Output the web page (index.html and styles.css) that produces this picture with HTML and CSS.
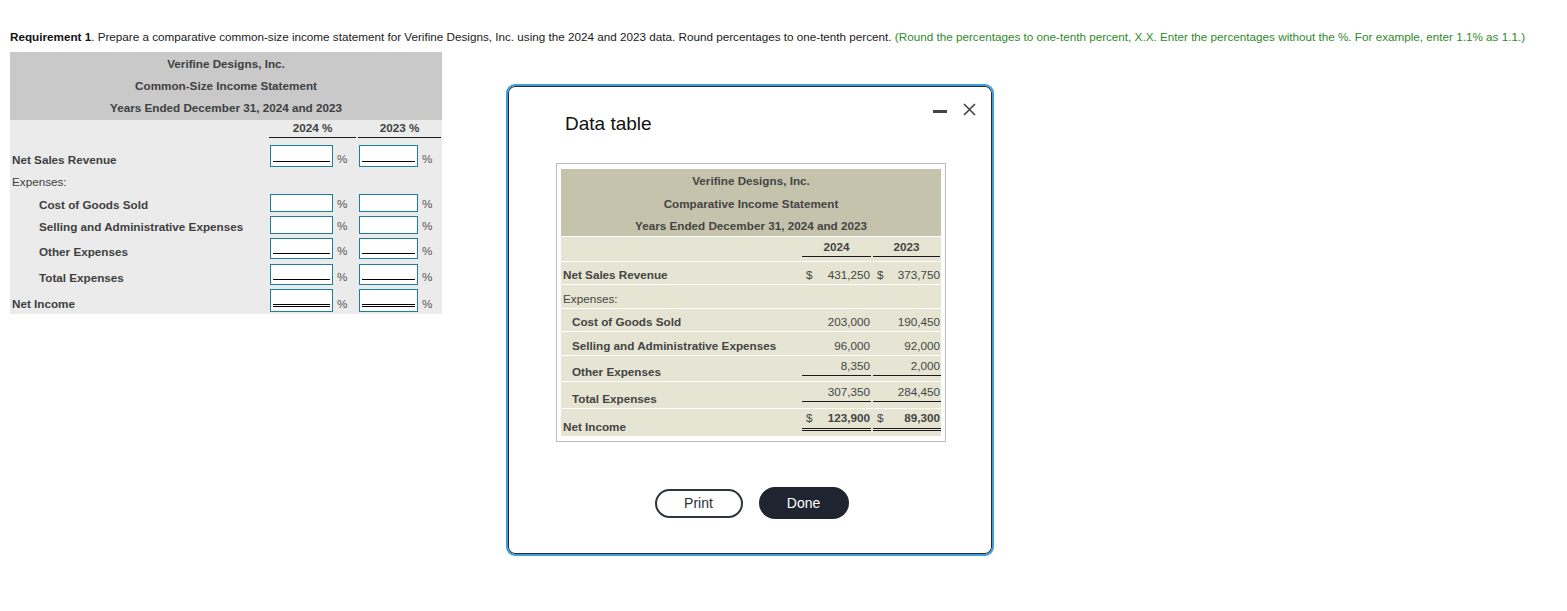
FILE: index.html
```html
<!DOCTYPE html>
<html lang="en">
<head>
<meta charset="utf-8">
<title>Common-Size Income Statement</title>
<link rel="stylesheet" href="styles.css">
</head>
<body>
<div class="page">
  <p class="req"><b>Requirement 1</b>. Prepare a comparative common-size income statement for Verifine Designs, Inc. using the 2024 and 2023 data. Round percentages to one-tenth percent. <span class="hint">(Round the percentages to one-tenth percent, X.X. Enter the percentages without the %. For example, enter 1.1% as 1.1.)</span></p>

  <div class="workarea">
    <div class="cs">
      <div class="cs-title">
        <div>Verifine Designs, Inc.</div>
        <div>Common-Size Income Statement</div>
        <div>Years Ended December 31, 2024 and 2023</div>
      </div>

      <div class="cs-lbl"></div>
      <div class="cs-yr c1"><span>2024 %</span></div>
      <div class="cs-yr c2"><span>2023 %</span></div>

      <div class="cs-lbl b">Net Sales Revenue</div>
      <div class="cs-in c1"><div class="box w1 h22 u1"><i></i></div><span class="pct">%</span></div>
      <div class="cs-in c2"><div class="box w2 h22 u1"><i></i></div><span class="pct">%</span></div>

      <div class="cs-lbl">Expenses:</div>
      <div class="cs-in c1"></div>
      <div class="cs-in c2"></div>

      <div class="cs-lbl b ind">Cost of Goods Sold</div>
      <div class="cs-in c1"><div class="box w1 h18"></div><span class="pct">%</span></div>
      <div class="cs-in c2"><div class="box w2 h18"></div><span class="pct">%</span></div>

      <div class="cs-lbl b ind">Selling and Administrative Expenses</div>
      <div class="cs-in c1"><div class="box w1 h18"></div><span class="pct">%</span></div>
      <div class="cs-in c2"><div class="box w2 h18"></div><span class="pct">%</span></div>

      <div class="cs-lbl b ind">Other Expenses</div>
      <div class="cs-in c1"><div class="box w1 h21 u1"><i></i></div><span class="pct">%</span></div>
      <div class="cs-in c2"><div class="box w2 h21 u1"><i></i></div><span class="pct">%</span></div>

      <div class="cs-lbl b ind">Total Expenses</div>
      <div class="cs-in c1"><div class="box w1 h21 u1"><i></i></div><span class="pct">%</span></div>
      <div class="cs-in c2"><div class="box w2 h21 u1"><i></i></div><span class="pct">%</span></div>

      <div class="cs-lbl b last">Net Income</div>
      <div class="cs-in c1 last"><div class="box w1 h23 u2"><i></i></div><span class="pct">%</span></div>
      <div class="cs-in c2 last"><div class="box w2 h23 u2"><i></i></div><span class="pct">%</span></div>
    </div>

    <div class="dialog">
      <div class="dlg-head">
        <div class="dlg-title">Data table</div>
        <div class="dlg-ctrl">
          <span class="min"></span>
          <svg class="close" width="13" height="13" viewBox="0 0 13 13"><path d="M1 1 L12 12 M12 1 L1 12" stroke="#444" stroke-width="1.6" fill="none"/></svg>
        </div>
      </div>

      <div class="frame">
        <div class="dt">
          <div class="dt-title">
            <div>Verifine Designs, Inc.</div>
            <div>Comparative Income Statement</div>
            <div>Years Ended December 31, 2024 and 2023</div>
          </div>

          <div class="dt-lbl"></div>
          <div class="dt-yr c1"><span>2024</span></div>
          <div class="dt-yr c2"><span>2023</span></div>

          <div class="dt-lbl b">Net Sales Revenue</div>
          <div class="dt-num c1"><div class="nv"><span>$</span><span>431,250</span></div></div>
          <div class="dt-num c2"><div class="nv"><span>$</span><span>373,750</span></div></div>

          <div class="dt-lbl">Expenses:</div>
          <div class="dt-num c1"></div>
          <div class="dt-num c2"></div>

          <div class="dt-lbl b ind">Cost of Goods Sold</div>
          <div class="dt-num c1"><div class="nv"><span></span><span>203,000</span></div></div>
          <div class="dt-num c2"><div class="nv"><span></span><span>190,450</span></div></div>

          <div class="dt-lbl b ind">Selling and Administrative Expenses</div>
          <div class="dt-num c1"><div class="nv"><span></span><span>96,000</span></div></div>
          <div class="dt-num c2"><div class="nv"><span></span><span>92,000</span></div></div>

          <div class="dt-lbl b ind">Other Expenses</div>
          <div class="dt-num c1 top"><div class="nv ul"><span></span><span>8,350</span></div></div>
          <div class="dt-num c2 top"><div class="nv ul"><span></span><span>2,000</span></div></div>

          <div class="dt-lbl b ind">Total Expenses</div>
          <div class="dt-num c1 top"><div class="nv ul"><span></span><span>307,350</span></div></div>
          <div class="dt-num c2 top"><div class="nv ul"><span></span><span>284,450</span></div></div>

          <div class="dt-lbl b">Net Income</div>
          <div class="dt-num c1 top2"><div class="nv dul"><span>$</span><span class="b">123,900</span></div></div>
          <div class="dt-num c2 top2"><div class="nv dul"><span>$</span><span class="b">89,300</span></div></div>
        </div>
      </div>

      <div class="dlg-btns">
        <button class="btn print" type="button">Print</button>
        <button class="btn done" type="button">Done</button>
      </div>
    </div>
  </div>
</div>
</body>
</html>
```
FILE: styles.css
```css
* { box-sizing: border-box; }

html, body {
  margin: 0;
  padding: 0;
  background: #ffffff;
}

body {
  font-family: "Liberation Sans", Arial, sans-serif;
  font-size: 11.7px;
  color: #1a1a1a;
}

.page {
  padding: 30px 10px 0 10px;
}

.req {
  margin: 0 0 8px 0;
  line-height: 14px;
  white-space: nowrap;
}

.req b { font-weight: bold; color: #111; }

.hint { color: #2f8a2a; }

.workarea {
  display: flex;
  align-items: flex-start;
}

/* ---------- Common-size table ---------- */
.cs {
  width: 432px;
  display: grid;
  grid-template-columns: 259px 89px 84px;
  grid-template-rows: 68px 20px 30px 22px 23px 22px 25px 26px 26px;
  background: #ebebeb;
  color: #3f3f3f;
}

.cs-title {
  grid-column: 1 / 4;
  background: #c9c9c9;
  text-align: center;
  font-weight: bold;
  line-height: 22px;
  padding-top: 1px;
}

.cs-lbl {
  align-self: end;
  padding: 0 0 3px 2px;
  line-height: 14px;
  white-space: nowrap;
}

.cs-lbl.b { font-weight: bold; }
.cs-lbl.ind { padding-left: 29px; }

.cs-yr {
  font-weight: bold;
  line-height: 14px;
}

.cs-yr span {
  display: block;
  text-align: center;
  padding: 1px 0 2px;
  border-bottom: 1px solid #1a1a1a;
}

.cs-yr.c1 span { margin-right: 2px; }
.cs-yr.c2 span { margin-right: 1px; }

.cs-in {
  display: flex;
  align-items: flex-end;
  gap: 4px;
  padding: 0 0 3px 1px;
}

.cs-in.last { padding-bottom: 2px; }

.box {
  background: #ffffff;
  border: 1px solid #1b7f9a;
  display: flex;
  align-items: flex-end;
  padding: 0 2px 4px 2px;
}

.box i { display: block; width: 100%; }
.box.u1 i { border-top: 1px solid #000; }
.box.u2 i { border-top: 3px double #000; }

.w1 { width: 63px; }
.w2 { width: 59px; }
.h18 { height: 18px; }
.h21 { height: 21px; }
.h22 { height: 22px; }
.h23 { height: 23px; }

.pct {
  line-height: 14px;
  color: #555;
  padding-bottom: 1px;
}

/* ---------- Dialog ---------- */
.dialog {
  margin: 32px 0 0 64px;
  width: 488px;
  height: 472px;
  border: 2px solid #3c9fdd;
  border-radius: 9px;
  box-shadow: inset 0 0 0 1px #2a2a2a;
  background: #fff;
  display: flex;
  flex-direction: column;
}

.dlg-head {
  display: flex;
  justify-content: space-between;
  align-items: flex-start;
  padding: 0 16px 0 57px;
}

.dlg-title {
  margin-top: 26px;
  font-size: 19px;
  line-height: 24px;
  color: #111;
}

.dlg-ctrl {
  margin-top: 17px;
  display: flex;
  align-items: center;
  gap: 16px;
}

.min {
  display: block;
  width: 14px;
  height: 3px;
  background: #454545;
  margin-top: 3px;
}

.close { display: block; }

.frame {
  margin: 27px 0 0 48px;
  width: 390px;
  border: 1px solid #bcbcbc;
  padding: 5px 4px;
}

.dt {
  display: grid;
  grid-template-columns: 241px 69px 70px;
  grid-template-rows: 67px 24px 22px 23px 22px 23px 25px 26px 27px;
  row-gap: 1px;
  background: #ffffff;
  color: #444;
}

.dt > div { background: #e6e4d3; }

.dt > .dt-title {
  grid-column: 1 / 4;
  background: #c6c3ad;
  text-align: center;
  font-weight: bold;
  line-height: 22.5px;
  padding-top: 1px;
}

.dt-lbl {
  display: flex;
  align-items: flex-end;
  padding: 0 0 2px 2px;
  line-height: 14px;
  white-space: nowrap;
}

.dt-lbl.b { font-weight: bold; }
.dt-lbl.ind { padding-left: 11px; }

.dt-yr {
  font-weight: bold;
  line-height: 14px;
}

.dt-yr span {
  display: block;
  text-align: center;
  padding: 3px 0 2px;
  border-bottom: 1px solid #1a1a1a;
}

.dt-yr.c2 span { margin-left: 2px; margin-right: 1px; }

.dt-num {
  display: flex;
  flex-direction: column;
  justify-content: flex-end;
  padding-bottom: 2px;
  line-height: 14px;
}

.dt-num.top {
  justify-content: flex-start;
  padding: 3px 0 0 0;
}

.dt-num.top2 {
  justify-content: flex-start;
  padding: 2px 0 0 0;
}

.nv {
  display: flex;
  justify-content: space-between;
  padding: 0 1px 0 4px;
}

.c2 .nv { margin-left: 2px; }

.nv.ul {
  padding-bottom: 2px;
  border-bottom: 1px solid #1a1a1a;
}

.nv.dul {
  padding-bottom: 3px;
  border-bottom: 3px double #1a1a1a;
}

.nv .b { font-weight: bold; }

.dlg-btns {
  margin-top: 45px;
  display: flex;
  justify-content: center;
  align-items: center;
  gap: 16px;
  padding-left: 3px;
}

.btn {
  font-family: "Liberation Sans", Arial, sans-serif;
  font-size: 14px;
  border-radius: 16px;
  cursor: pointer;
}

.print {
  width: 88px;
  height: 29px;
  background: #fff;
  color: #2a2f3a;
  border: 2px solid #2e3440;
}

.done {
  width: 90px;
  height: 32px;
  background: #1f2431;
  color: #fff;
  border: none;
}
```
